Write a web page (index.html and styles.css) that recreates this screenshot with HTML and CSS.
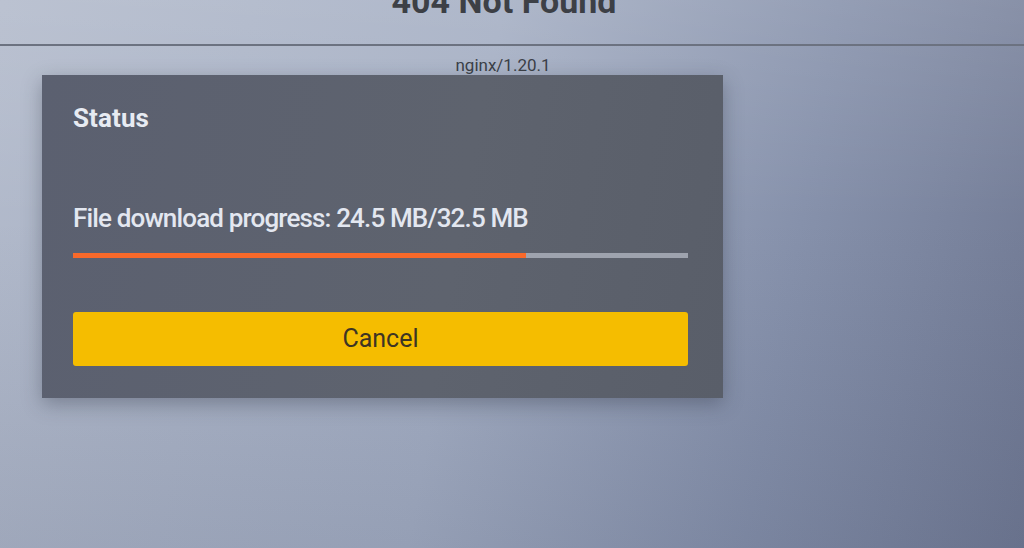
FILE: index.html
```html
<!doctype html>
<html lang="en">
<head>
    <meta charset="UTF-8">
    <meta name="viewport" content="width=device-width, initial-scale=1.0">
    <title>404 Not Found</title>
    <link rel="stylesheet" href="styles.css">
</head>
<body>
<div class="page">
    <h1 class="title">404 Not Found</h1>
    <hr class="rule">
    <div class="server">nginx/1.20.1</div>

    <div class="dialog">
        <div class="dialogTitle">Status</div>
        <div class="progressText">File download progress: 24.5 MB/32.5 MB</div>
        <div class="bar">
            <span class="barFill" style="width: 73.6%"></span>
        </div>
        <a href="javascript:;" class="cancelBtn">Cancel</a>
    </div>
</div>
</body>
</html>
```

FILE: styles.css
```css
* {
    margin: 0;
    padding: 0;
    box-sizing: border-box;
}

html, body {
    width: 100%;
    height: 100%;
    overflow: hidden;
}

body {
    font-family: Roboto, "Liberation Sans", sans-serif;
    background: linear-gradient(100deg, #b2bacb 0%, #a4aec3 45%, #8691ab 75%, #717a94 100%);
}

.page {
    position: relative;
    display: flow-root;
    height: 100%;
}

.page::after {
    content: "";
    position: absolute;
    left: 0;
    top: 0;
    right: 0;
    bottom: 0;
    background: linear-gradient(180deg, rgba(255, 255, 255, 0.12) 0%, rgba(255, 255, 255, 0) 40%, rgba(40, 50, 80, 0.12) 100%);
    pointer-events: none;
}

.title {
    margin-top: -17px;
    height: 36px;
    line-height: 36px;
    text-align: center;
    font-size: 34px;
    font-weight: 700;
    color: #23262d;
    padding-right: 16px;
}

.rule {
    margin-top: 25px;
    border: 0;
    height: 2px;
    background: #5c6373;
}

.server {
    margin-top: 9px;
    height: 20px;
    line-height: 20px;
    text-align: center;
    font-size: 17px;
    color: #2a2e36;
    padding-right: 18px;
}

.dialog {
    position: relative;
    z-index: 1;
    margin-left: 42px;
    width: 681px;
    height: 323px;
    padding: 27px 35px 0 31px;
    background: linear-gradient(100deg, #5b6070 0%, #5e636e 60%, #595e69 100%);
    box-shadow: 0 6px 18px rgba(40, 45, 60, 0.35);
}

.dialogTitle {
    height: 32px;
    line-height: 32px;
    font-size: 26px;
    font-weight: 700;
    color: #e7ebf2;
    letter-spacing: 0.1px;
}

.progressText {
    margin-top: 68px;
    height: 32px;
    line-height: 32px;
    font-size: 26px;
    font-weight: 500;
    color: #e3e7f0;
    letter-spacing: -0.85px;
}

.bar {
    margin-top: 19px;
    height: 5px;
    background: #9ea3ae;
}

.barFill {
    display: block;
    height: 100%;
    background: #f8692a;
}

.cancelBtn {
    display: block;
    margin-top: 54px;
    height: 54px;
    line-height: 54px;
    border-radius: 3px;
    background: #f5bd00;
    text-align: center;
    font-size: 25px;
    color: #3d3524;
    text-decoration: none;
}
```
